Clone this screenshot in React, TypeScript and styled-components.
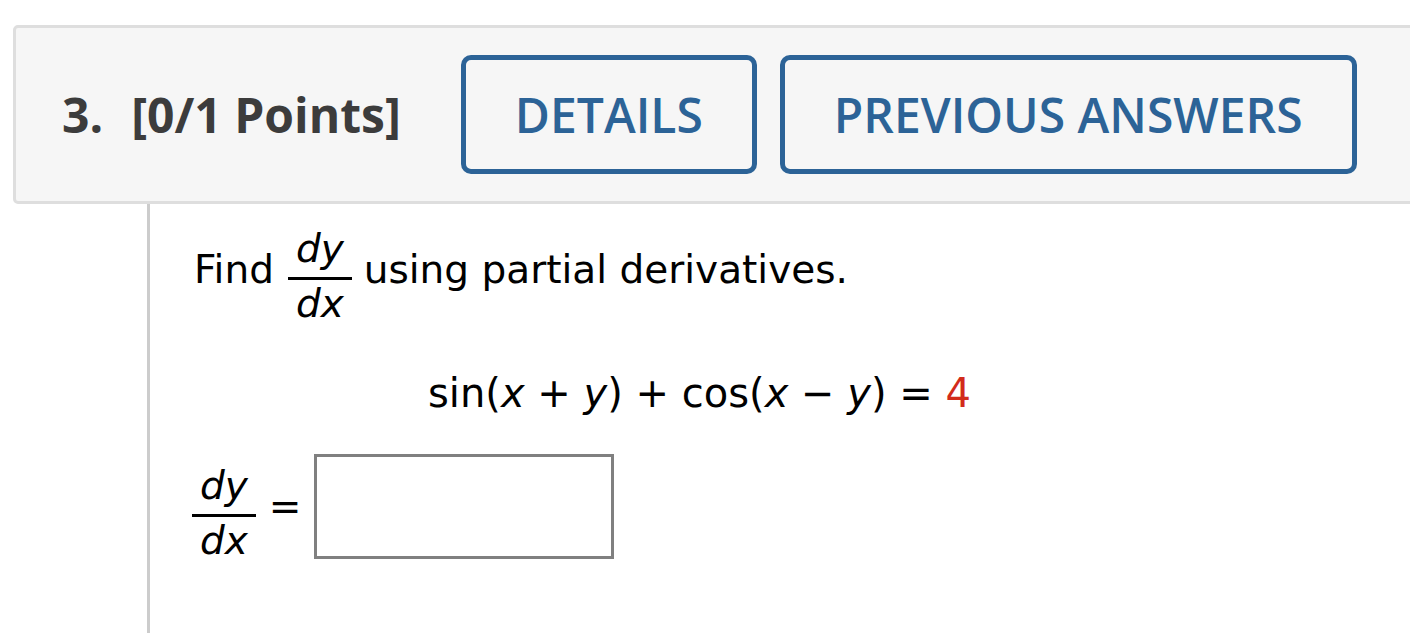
import React from "react";
import styled, { createGlobalStyle } from "styled-components";

const GlobalStyle = createGlobalStyle`
  html, body {
    margin: 0;
    padding: 0;
    background: #ffffff;
    overflow: hidden;
  }
`;

const Page = styled.div`
  width: 1410px;
  height: 633px;
  padding: 25px 0 0 13px;
  box-sizing: border-box;
  overflow: hidden;
`;

const Header = styled.div`
  display: flex;
  align-items: center;
  margin-right: -20px;
  padding: 27px 0 27px 46px;
  background: #f6f6f6;
  border: 3px solid #dedede;
  border-radius: 5px;
  font-family: "Open Sans", sans-serif;
`;

const Number = styled.span`
  font-size: 48px;
  font-weight: 700;
  color: #3c3c3c;
  margin-right: 28px;
`;

const Points = styled.span`
  font-size: 48px;
  font-weight: 700;
  color: #3c3c3c;
  margin-right: 60px;
`;

const Button = styled.button`
  height: 119px;
  padding: 0 49px;
  margin-right: 23px;
  background: transparent;
  border: 5px solid #2c6397;
  border-radius: 10px;
  color: #2c6397;
  font-family: "Open Sans", sans-serif;
  font-size: 48px;
  font-weight: 600;
  cursor: pointer;
`;

const Body = styled.div`
  margin-left: 134px;
  height: 440px;
  border-left: 3px solid #cccccc;
  padding: 9px 0 0 44px;
  font-family: "DejaVu Sans", Verdana, sans-serif;
  font-size: 39px;
  color: #000;
`;

const Line = styled.div`
  display: flex;
  align-items: center;
  line-height: 45px;
`;

const Fraction = styled.span<{ $left: number; $right: number }>`
  display: inline-flex;
  flex-direction: column;
  align-items: stretch;
  font-style: italic;
  text-align: center;
  margin: 13px ${(p) => p.$right}px 0 ${(p) => p.$left}px;
`;

const Num = styled.span`
  padding: 0 8px 6px;
  line-height: 45px;
  border-bottom: 3px solid #000;
`;

const Den = styled.span`
  padding: 1px 8px 0;
  line-height: 45px;
`;

const Equation = styled.div`
  margin: 42px 0 0 234px;
  font-size: 40px;
  line-height: 50px;
  & i {
    font-style: italic;
  }
`;

const Given = styled.span`
  color: #d22b1b;
`;

const AnswerRow = styled.div`
  display: flex;
  align-items: center;
  margin-top: 32px;
`;

const Equals = styled.span`
  margin: 0 12px 0 13px;
`;

const AnswerBox = styled.input`
  width: 300px;
  height: 105px;
  box-sizing: border-box;
  border: 3px solid #808080;
  background: #fff;
  outline: none;
`;

const DyDx = ({ left, right }: { left: number; right: number }) => (
  <Fraction $left={left} $right={right}>
    <Num>dy</Num>
    <Den>dx</Den>
  </Fraction>
);

export default function App() {
  return (
    <Page>
      <GlobalStyle />
      <Header>
        <Number>3.</Number>
        <Points>[0/1 Points]</Points>
        <Button>DETAILS</Button>
        <Button>PREVIOUS ANSWERS</Button>
      </Header>
      <Body>
        <Line>
          Find
          <DyDx left={14} right={12} />
          using partial derivatives.
        </Line>
        <Equation>
          sin(<i>x</i> + <i>y</i>) + cos(<i>x</i> − <i>y</i>) = <Given>4</Given>
        </Equation>
        <AnswerRow>
          <DyDx left={-2} right={0} />
          <Equals>=</Equals>
          <AnswerBox type="text" />
        </AnswerRow>
      </Body>
    </Page>
  );
}
